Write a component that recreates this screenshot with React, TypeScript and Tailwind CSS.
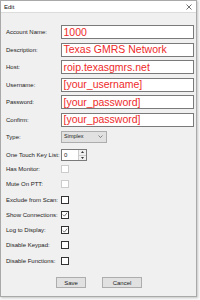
import React from "react";

const font = { fontFamily: '"Liberation Sans", Arial, sans-serif' };

const textFields = [
  { label: "Account Name:", value: "1000" },
  { label: "Description:", value: "Texas GMRS Network" },
  { label: "Host:", value: "roip.texasgmrs.net" },
  { label: "Username:", value: "[your_username]" },
  { label: "Password:", value: "[your_password]" },
  { label: "Confirm:", value: "[your_password]" },
];

const checks = [
  { label: "Has Monitor:", checked: false, disabled: true },
  { label: "Mute On PTT:", checked: false, disabled: true },
  { label: "Exclude from Scan:", checked: false },
  { label: "Show Connections:", checked: true },
  { label: "Log to Display:", checked: true },
  { label: "Disable Keypad:", checked: false },
  { label: "Disable Functions:", checked: false },
];

const labelClass = "w-[55px] shrink-0 text-[6px] leading-none text-[#222]";

function Check({ checked, disabled }: { checked: boolean; disabled?: boolean }) {
  return (
    <div
      className={`flex h-[8px] w-[8px] items-center justify-center border bg-white ${
        disabled ? "border-[#cccccc]" : "border-[#333333]"
      }`}
    >
      {checked && (
        <svg width="7" height="7" viewBox="0 0 7 7">
          <path d="M1 3.6 L2.8 5.4 L6 1.4" fill="none" stroke="#333" strokeWidth="0.8" />
        </svg>
      )}
    </div>
  );
}

export default function App() {
  return (
    <div className="h-[300px] w-[200px] bg-[#f7f7f7]" style={font}>
      <div className="flex h-[297px] w-[197px] flex-col border border-[#a9a9a9] bg-[#f0f0f0] shadow-[1px_1px_2px_rgba(0,0,0,0.2)]">
        <div className="flex h-[12px] items-center justify-between border-b border-[#dcdcdc] bg-white pl-[3px] pr-[4px]">
          <span className="text-[6px] leading-none text-[#111]">Edit</span>
          <svg width="6" height="6" viewBox="0 0 6 6">
            <path d="M0.5 0.5 L5.5 5.5 M5.5 0.5 L0.5 5.5" stroke="#333" strokeWidth="0.7" />
          </svg>
        </div>

        <div className="flex flex-col pl-[5px] pr-[2px] pt-[12px]">
          <div className="flex flex-col gap-[3.5px]">
            {textFields.map((f) => (
              <div key={f.label} className="flex items-center">
                <span className={labelClass}>{f.label}</span>
                <div className="flex h-[14px] flex-1 items-center border border-[#7a7a7a] bg-white pl-[1.5px]">
                  <span className="text-[10.5px] leading-none text-[#ee2a2a]">{f.value}</span>
                </div>
              </div>
            ))}
          </div>

          <div className="mt-[4.5px] flex items-center">
            <span className={labelClass}>Type:</span>
            <div className="flex h-[11.5px] w-[46px] items-center justify-between border border-[#adadad] bg-[#e1e1e1] pl-[2px] pr-[3px]">
              <span className="text-[5.5px] leading-none text-[#222]">Simplex</span>
              <svg width="5" height="3" viewBox="0 0 5 3">
                <path d="M0.5 0.5 L2.5 2.5 L4.5 0.5" fill="none" stroke="#444" strokeWidth="0.6" />
              </svg>
            </div>
          </div>

          <div className="mt-[6.5px] flex items-center">
            <span className={labelClass}>One Touch Key List:</span>
            <div className="flex h-[12px] items-stretch border border-[#7a7a7a] bg-white">
              <div className="flex w-[16px] items-center pl-[2px] text-[6px] leading-none text-[#222]">0</div>
              <div className="flex w-[8px] flex-col border-l border-[#cccccc]">
                <div className="flex flex-1 items-center justify-center border-b border-[#cccccc] bg-[#f0f0f0]">
                  <svg width="3" height="2" viewBox="0 0 3 2">
                    <path d="M0 2 L1.5 0 L3 2 Z" fill="#333" />
                  </svg>
                </div>
                <div className="flex flex-1 items-center justify-center bg-[#f0f0f0]">
                  <svg width="3" height="2" viewBox="0 0 3 2">
                    <path d="M0 0 L1.5 2 L3 0 Z" fill="#333" />
                  </svg>
                </div>
              </div>
            </div>
          </div>

          <div className="mt-[4px] flex flex-col gap-[7.3px]">
            {checks.map((c) => (
              <div key={c.label} className="flex items-center">
                <span className={labelClass}>{c.label}</span>
                <Check checked={c.checked} disabled={c.disabled} />
              </div>
            ))}
          </div>

          <div className="mt-[12px] flex gap-[16px] pl-[50px]">
            <button className="h-[11.5px] w-[30px] border border-[#adadad] bg-[#e1e1e1] text-[6px] leading-none text-[#222]">Save</button>
            <button className="h-[11.5px] w-[40px] border border-[#adadad] bg-[#e1e1e1] text-[6px] leading-none text-[#222]">Cancel</button>
          </div>
        </div>
      </div>
    </div>
  );
}
